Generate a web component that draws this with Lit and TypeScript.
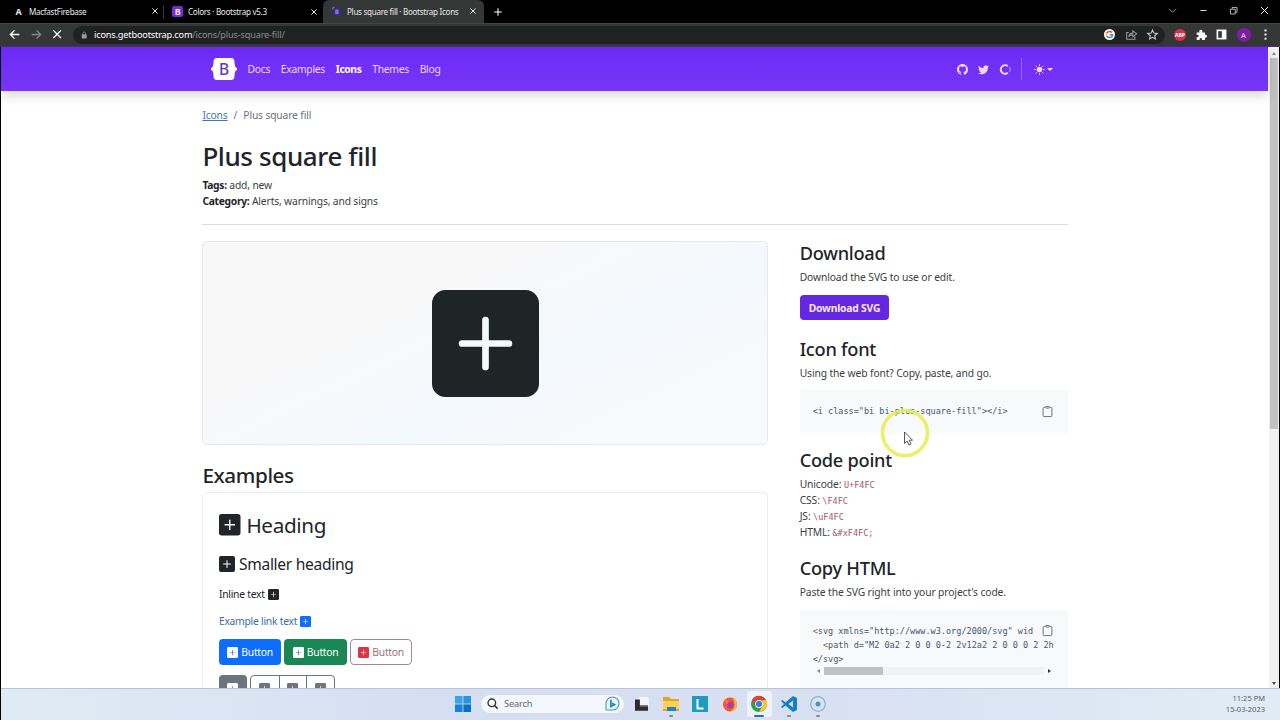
import { LitElement, html, css, svg } from "lit";
import { customElement } from "lit/decorators.js";

const PLUS =
  "M2 0a2 2 0 0 0-2 2v12a2 2 0 0 0 2 2h12a2 2 0 0 0 2-2V2a2 2 0 0 0-2-2H2zm6.5 4.5v3h3a.5.5 0 0 1 0 1h-3v3a.5.5 0 0 1-1 0v-3h-3a.5.5 0 0 1 0-1h3v-3a.5.5 0 0 1 1 0z";
const GITHUB =
  "M8 0C3.58 0 0 3.58 0 8c0 3.54 2.29 6.53 5.47 7.59.4.07.55-.17.55-.38 0-.19-.01-.82-.01-1.49-2.01.37-2.53-.49-2.69-.94-.09-.23-.48-.94-.82-1.13-.28-.15-.68-.52-.01-.53.63-.01 1.08.58 1.23.82.72 1.21 1.87.87 2.33.66.07-.52.28-.87.51-1.07-1.78-.2-3.64-.89-3.64-3.95 0-.87.31-1.59.82-2.15-.08-.2-.36-1.02.08-2.12 0 0 .67-.21 2.2.82.64-.18 1.32-.27 2-.27.68 0 1.36.09 2 .27 1.53-1.04 2.2-.82 2.2-.82.44 1.1.16 1.92.08 2.12.51.56.82 1.27.82 2.15 0 3.07-1.87 3.75-3.65 3.95.29.25.54.73.54 1.48 0 1.07-.01 1.93-.01 2.2 0 .21.15.46.55.38A8.012 8.012 0 0 0 16 8c0-4.42-3.58-8-8-8z";
const TWITTER =
  "M5.026 15c6.038 0 9.341-5.003 9.341-9.334 0-.14 0-.282-.006-.422A6.685 6.685 0 0 0 16 3.542a6.658 6.658 0 0 1-1.889.518 3.301 3.301 0 0 0 1.447-1.817 6.533 6.533 0 0 1-2.087.793A3.286 3.286 0 0 0 7.875 6.03a9.325 9.325 0 0 1-6.767-3.429 3.289 3.289 0 0 0 1.018 4.382A3.323 3.323 0 0 1 .64 6.575v.045a3.288 3.288 0 0 0 2.632 3.218 3.203 3.203 0 0 1-.865.115 3.23 3.23 0 0 1-.614-.057 3.283 3.283 0 0 0 3.067 2.277A6.588 6.588 0 0 1 .78 13.58a6.32 6.32 0 0 1-.78-.045A9.344 9.344 0 0 0 5.026 15z";

const icon = (cls: string, body: unknown, box = "0 0 16 16") =>
  html`<svg class="ic ${cls}" viewBox=${box}>${body}</svg>`;
const plus = (cls = "s11") => icon(cls, svg`<path fill="currentColor" d=${PLUS} />`);
const clip = () =>
  icon("s11", svg`<path fill="none" stroke="currentColor" stroke-width="1.300" d="M4.500 2H3.200A1.600 1.600 0 0 0 1.600 3.600V13.800A1.600 1.600 0 0 0 3.200 15.400H12.800A1.600 1.600 0 0 0 14.400 13.800V3.600A1.600 1.600 0 0 0 12.800 2H11.500M6 .7H10Q10.700 .7 10.700 1.400V2.300Q10.700 3 10 3H6Q5.300 3 5.300 2.300V1.400Q5.300 .7 6 .7Z" />`);
const cross = (cls = "s7") =>
  icon(cls, svg`<path stroke="currentColor" stroke-width="2.600" d="M1 1 15 15M15 1 1 15" />`);

const reset = css`
  * { box-sizing: border-box; }
  .ic { display: block; flex: none; overflow: visible; }
  .s7 { width: 6px; height: 6px; }
  .s11 { width: 11px; height: 11px; }
  .s12 { width: 13px; height: 13px; }
  .s16 { width: 16px; height: 16px; }
  .s21 { width: 21.500px; height: 21.500px; }
  .grow { flex: 1; }
`;

@customElement("browser-chrome")
class BrowserChrome extends LitElement {
  static styles = [reset, css`
    :host { display: block; height: 47px; background: #000; color: #e8e8e8; font: 8.100px "Noto Sans", sans-serif; flex: none; }
    .tabs { display: flex; height: 23px; align-items: center; padding-left: 2px; }
    .tab { display: flex; align-items: center; height: 23px; width: 161px; padding: 0 5px 1px 11px; letter-spacing: -0.300px; white-space: nowrap; }
    .tab.second { width: 160px; padding: 0 6px 0 8px; border-left: 1px solid #333; height: 14px; }
    .tab.active { background: #353636; border-radius: 6px 6px 0 0; width: 161px; padding: 0 8px 1px 8px; }
    .fav { width: 11px; height: 11px; margin-right: 5px; display: grid; place-items: center; font-weight: 700; font-size: 9px; line-height: 11px; }
    .fav.b { background: #7a2bd0; border-radius: 2px; }
    .new { margin-left: 11px; }
    .win { display: flex; align-items: center; gap: 23.600px; padding: 0 12px 3px 0; }
    .s8 { width: 7px; height: 7px; }
    .bar { display: flex; height: 24px; background: #353636; align-items: center; padding: 0 9px 1px 9px; border-top: 1px solid #434444; border-bottom: 1px solid #43385c; }
    .nav { display: flex; gap: 10.500px; align-items: center; width: 64px; flex: none; }
    .url { flex: 1; display: flex; align-items: center; height: 18px; border-radius: 9px; background: #1f2122; padding: 0 7px 0 8px; font-size: 9.200px; letter-spacing: -0.180px; color: #878b8b; }
    .url .lock { margin-right: 7px; color: #9a9d9d; }
    .url b { color: #fff; font-weight: 400; }
    .acts { display: flex; gap: 10.500px; align-items: center; }
    .ext { display: flex; gap: 9.500px; align-items: center; padding-left: 9px; }
    .abp { width: 12px; height: 12px; border-radius: 6px; background: #d5314b; color: #fff; display: grid; place-items: center; font: 700 5px/12px "Noto Sans", sans-serif; }
    .ava { width: 14px; height: 14px; border-radius: 7px; background: #7b1fa2; color: #f2d6ff; display: grid; place-items: center; font: 7.500px/14px "Noto Sans", sans-serif; }
  `];
  render() {
    return html`
      <div class="tabs">
        <div class="tab"><span class="fav">A</span><span>MacfastFirebase</span><span class="grow"></span>${cross()}</div>
        <div class="tab second"><span class="fav b">B</span><span>Colors · Bootstrap v5.3</span><span class="grow"></span>${cross()}</div>
        <div class="tab active">
          <span class="fav">${icon("s11", svg`<circle cx="8.500" cy="8.500" r="6" fill="#3a2a80" /><path d="M2 5Q3 2 5 1" stroke="#8a70e8" fill="none" stroke-width="1.500" /><rect x="6" y="5" width="5" height="7" rx="1.500" fill="#7f6ce8" />`)}</span>
          <span>Plus square fill · Bootstrap Icons</span><span class="grow"></span>${cross()}
        </div>
        ${icon("s7 new", svg`<path stroke="#fff" stroke-width="2.800" d="M8-2V18M-2 8H18" />`)}
        <span class="grow"></span>
        <div class="win">
          ${icon("s8", svg`<path fill="none" stroke="#aaa" stroke-width="2" d="M0 4 8 12 16 4" />`)}
          ${icon("s8", svg`<path stroke="#ddd" stroke-width="2.200" d="M1 8H15" />`)}
          ${icon("s8", svg`<path fill="none" stroke="#ccc" stroke-width="2" d="M1 5H12V16H1ZM5 4V1H16V12H13" />`)}
          ${icon("s8", svg`<path stroke="#fff" stroke-width="2.200" d="M0 0 16 16M16 0 0 16" />`)}
        </div>
      </div>
      <div class="bar">
        <div class="nav">
          ${icon("s11", svg`<path fill="none" stroke="#fff" stroke-width="2" d="M15 8H2M8 2 2 8 8 14" />`)}
          ${icon("s11", svg`<path fill="none" stroke="#858585" stroke-width="2" d="M1 8H14M8 2 14 8 8 14" />`)}
          ${icon("s11", svg`<path stroke="#fff" stroke-width="2" d="M2 2 13 13M13 2 2 13" />`)}
        </div>
        <div class="url">
          ${icon("s7 lock", svg`<rect x="2" y="6" width="13" height="11" rx="1" fill="currentColor" /><path d="M5 6V2Q8.500-3 12 2V6" fill="none" stroke="currentColor" stroke-width="2" />`)}
          <b>icons.getbootstrap.com</b>/icons/plus-square-fill/
          <span class="grow"></span>
          <div class="acts">
            ${icon("s11", svg`<circle cx="8" cy="8" r="8" fill="#fff" /><g fill="none" stroke-width="2.200"><path d="M11.500 5A4.600 4.600 0 0 0 4 6" stroke="#ea4335" /><path d="M4 6A4.600 4.600 0 0 0 4 10.200" stroke="#fbbc05" /><path d="M4 10.200A4.600 4.600 0 0 0 11 11.400" stroke="#34a853" /><path d="M11 11.400A4.600 4.600 0 0 0 12.500 8.200H8" stroke="#4285f4" /></g>`)}
            ${icon("s11", svg`<path fill="none" stroke="#999" stroke-width="1.500" d="M4 5H1V15H13V11M4 11Q5 6 10 6V2.500L15.500 7 10 11.500V8.500Q6 8.500 4 11Z" />`)}
            ${icon("s11", svg`<path fill="none" stroke="#ccc" stroke-width="1.500" d="M8 1.500 10 6 15 6.500 11.200 9.800 12.300 14.500 8 12 3.700 14.500 4.800 9.800 1 6.500 6 6Z" />`)}
          </div>
        </div>
        <div class="ext">
          <span class="abp">ABP</span>
          ${icon("s11", svg`<path fill="#fff" d="M1 5H5Q4 1 7 1T9 5H13V8.500Q16 8 16 10.500T13 12.500V16H9Q9 13 7 13T5 16H1V12Q4 12 4 10T1 8.500Z" />`)}
          ${icon("s11", svg`<rect x="2" y="2" width="12" height="12" fill="none" stroke="#fff" stroke-width="2.400" /><rect x="8.500" y="2" width="5.500" height="12" fill="#fff" />`)}
          <span class="ava">A</span>
          ${icon("s11", svg`<g fill="#ddd"><circle cx="8" cy="2" r="1.700" /><circle cx="8" cy="8" r="1.700" /><circle cx="8" cy="14" r="1.700" /></g>`)}
        </div>
      </div>`;
  }
}

@customElement("site-nav")
class SiteNav extends LitElement {
  static styles = [reset, css`
    :host { display: flex; flex: none; align-items: center; height: 44px; margin-right: 1px; padding: 0 215px 0 210px; background: linear-gradient(#6d2af5, #7835f8); box-shadow: 0 5px 11px rgba(0, 0, 0, 0.150); color: #eed9fd; font: 10.300px "Noto Sans", sans-serif; letter-spacing: -0.270px; position: relative; }
    .brand { display: grid; margin-right: 10.500px; }
    .brand > * { grid-area: 1 / 1; }
    .brand svg { width: 26px; height: 22px; }
    .brand span { place-self: center; color: #5f3bb5; font: 500 15.500px/22px "Noto Sans", sans-serif; letter-spacing: 0; }
    .links { display: flex; gap: 10.800px; }
    .links b { color: #fff; letter-spacing: -0.400px; }
    .icons { display: flex; align-items: center; gap: 10.500px; }
    .vr { width: 1px; height: 22px; background: #9a6bf9; }
    .caret { border: 3px solid transparent; border-top-color: currentColor; border-bottom: 0; margin-left: -8px; }
    .theme { margin-left: 1px; }
  `];
  render() {
    return html`
      <div class="brand">
        <svg viewBox="0 0 26 22"><path fill="#fff" d="M6 0H20Q23.500 0 23.500 4Q23.400 9.500 26 10V12Q23.400 12.500 23.500 18Q23.500 22 20 22H6Q2.500 22 2.500 18Q2.600 12.500 0 12V10Q2.600 9.500 2.500 4Q2.500 0 6 0Z" /></svg>
        <span>B</span>
      </div>
      <div class="links"><span>Docs</span><span>Examples</span><b>Icons</b><span>Themes</span><span>Blog</span></div>
      <span class="grow"></span>
      <div class="icons">
        ${icon("s11", svg`<path fill="currentColor" d=${GITHUB} />`)}
        ${icon("s11", svg`<path fill="currentColor" d=${TWITTER} />`)}
        ${icon("s11", svg`<path fill="none" stroke="currentColor" stroke-width="3" d="M11.300 3A6.300 6.300 0 1 0 11.300 13" /><path fill="none" stroke="#b489fb" stroke-width="2" d="M14 4.500Q16 8 14 11.500" />`)}
        <span class="vr"></span>
        ${icon("s11 theme", svg`<circle cx="8" cy="8" r="4" fill="currentColor" /><path stroke="currentColor" stroke-width="1.200" stroke-linecap="round" d="M8 .5V2.500M8 13.500V15.500M.5 8H2.500M13.500 8H15.500M2.700 2.700 4.100 4.100M11.900 11.900 13.300 13.300M13.300 2.700 11.900 4.100M4.100 11.900 2.700 13.300" />`)}
        <span class="caret"></span>
      </div>`;
  }
}

@customElement("icon-page")
class IconPage extends LitElement {
  static styles = [reset, css`
    :host { display: block; flex: 1; min-height: 0; overflow: hidden; padding: 16px 201px 0 201.400px; color: #212529; font: 10.300px/16px "Noto Sans", sans-serif; letter-spacing: -0.240px; white-space: nowrap; }
    h1, h2, h3, p { margin: 0; font-weight: 500; }
    p { font-weight: 400; color: #3c4043; letter-spacing: -0.120px; }
    .crumb { display: flex; gap: 6px; color: #6c757d; letter-spacing: -0.150px; }
    .crumb u { color: #3f78b5; }
    h1 { font-size: 26px; line-height: 32px; margin: 17px 0 5px; letter-spacing: -0.400px; }
    p.meta { letter-spacing: -0.150px; }
    .meta b { color: #212529; letter-spacing: -0.300px; }
    .rule { height: 1px; background: #dcdddd; margin: 15px 0 16px; }
    .cols { display: grid; grid-template-columns: 565.600px 268px; column-gap: 31.700px; }
    .preview { height: 204px; border: 1px solid #e6e9ec; border-radius: 5px; display: grid; place-items: center; background: linear-gradient(155deg, #f8f8f9 35%, #f4f9fd 60%, #f8f9fb 90%); color: #1f2426; }
    .preview svg { width: 107px; height: 107px; }
    h2 { font-size: 20.700px; line-height: 26px; margin: 17px 0 4px; letter-spacing: -0.400px; }
    .card { border: 1px solid #e8ebed; border-radius: 5px; height: 240px; padding: 16px 15.500px; }
    .row { display: flex; align-items: center; }
    .r1 { font-size: 20.700px; height: 32px; gap: 6px; letter-spacing: -0.350px; }
    .r2 { font-size: 15.600px; height: 24px; gap: 4px; margin-top: 11px; letter-spacing: -0.300px; }
    .r3 { height: 16px; gap: 3px; margin-top: 10px; }
    .r4 { height: 16px; gap: 3px; margin-top: 11px; color: #3a6ea8; }
    .r4 svg { color: #0d6efd; }
    .btns { display: flex; gap: 3px; margin-top: 10px; }
    .btn { display: flex; align-items: center; gap: 3px; height: 26px; width: 62.500px; justify-content: center; border-radius: 4px; border: 1px solid transparent; color: #fff; }
    .btn.p { background: #0d6efd; }
    .btn.g { background: #198754; }
    .btn.o { border-color: #a9868f; color: #9c6f7a; }
    .btn.o svg { color: #dc3545; }
    .tools { display: flex; gap: 3px; margin-top: 10px; color: #6c757d; }
    .tb { width: 28px; height: 26px; display: grid; place-items: center; background: #6c757d; color: #fff; border-radius: 4px; }
    .grp { display: flex; border: 1px solid #6c757d; border-radius: 4px; }
    .grp span { width: 27.700px; height: 24px; display: grid; place-items: center; }
    .grp span + span { border-left: 1px solid #6c757d; }
    h3 { font-size: 18.200px; line-height: 24px; margin: 16px 0 4px; letter-spacing: -0.250px; }
    h3.first { margin-top: 0; }
    .dl { display: grid; place-items: center; width: 89.500px; height: 25px; margin: 10px 0 17px; border-radius: 4px; background: #6528e0; color: #f8e6ff; font-weight: 700; letter-spacing: -0.200px; }
    .code { position: relative; background: #f8f9fa; font: 8.520px/14px "DejaVu Sans Mono", monospace; letter-spacing: 0; color: #4c5560; overflow: hidden; white-space: pre; }
    .c1 { height: 43px; margin-top: 9px; padding: 14px 13px; }
    .c2 { height: 90px; margin-top: 10px; padding: 14px 13px 0 13px; }
    .line { height: 14px; }
    .copy { position: absolute; right: 14.500px; color: #5d6266; }
    .c1 .copy { top: 16px; }
    .c2 .copy { top: 15px; }
    h3.cp { margin-top: 15px; }
    code { font: 8.520px "DejaVu Sans Mono", monospace; letter-spacing: 0; color: #a5566f; }
    .sc { display: flex; align-items: center; height: 8px; margin-top: 1px; margin-left: 4px; }
    .thumb { width: 59px; height: 8px; background: #c1c1c1; margin-left: 4px; }
    .ar { border: 2.500px solid transparent; }
    .ar.l { border-left: 0; border-right: 3px solid #888; }
    .ar.r { border-right: 0; border-left: 3px solid #333; margin-right: 4px; }
    .track { flex: 1; height: 8px; background: #f1f2f3; margin-right: 4px; }
    .tg { color: #7c6a3a; }
    .st { color: #3f5875; }
  `];
  render() {
    return html`
      <div class="crumb"><u>Icons</u><span>/</span><span>Plus square fill</span></div>
      <h1>Plus square fill</h1>
      <p class="meta"><b>Tags:</b> add, new</p>
      <p class="meta"><b>Category:</b> Alerts, warnings, and signs</p>
      <div class="rule"></div>
      <div class="cols">
        <div>
          <div class="preview">${plus("")}</div>
          <h2>Examples</h2>
          <div class="card">
            <div class="row r1">${plus("s21")}<span>Heading</span></div>
            <div class="row r2">${plus("s16")}<span>Smaller heading</span></div>
            <div class="row r3"><span>Inline text</span>${plus()}</div>
            <div class="row r4"><span>Example link text</span>${plus()}</div>
            <div class="btns">
              <span class="btn p">${plus()}Button</span>
              <span class="btn g">${plus()}Button</span>
              <span class="btn o">${plus()}Button</span>
            </div>
            <div class="tools">
              <span class="tb">${plus()}</span>
              <div class="grp"><span>${plus()}</span><span>${plus()}</span><span>${plus()}</span></div>
            </div>
          </div>
        </div>
        <div>
          <h3 class="first">Download</h3>
          <p>Download the SVG to use or edit.</p>
          <div class="dl">Download SVG</div>
          <h3>Icon font</h3>
          <p>Using the web font? Copy, paste, and go.</p>
          <div class="code c1"><div class="line">&lt;i class=<span class="st">"bi bi-plus-square-fill"</span>&gt;&lt;/i&gt;</div><div class="copy">${clip()}</div></div>
          <h3 class="cp">Code point</h3>
          <p>Unicode: <code>U+F4FC</code></p>
          <p>CSS: <code>\\F4FC</code></p>
          <p>JS: <code>\\uF4FC</code></p>
          <p>HTML: <code>&amp;#xF4FC;</code></p>
          <h3>Copy HTML</h3>
          <p>Paste the SVG right into your project's code.</p>
          <div class="code c2"><div class="line"><span class="tg">&lt;</span>svg xmlns=<span class="st">"http://www.w3.org/2000/svg"</span> wid</div><div class="line">  <span class="tg">&lt;</span>path d=<span class="st">"M2 0a2 2 0 0 0-2 2v12a2 2 0 0 0 2 2h</span></div><div class="line">&lt;/svg&gt;</div><div class="sc"><span class="ar l"></span><span class="thumb"></span><span class="track"></span><span class="ar r"></span></div><div class="copy">${clip()}</div></div>
        </div>
      </div>`;
  }
}

@customElement("task-bar")
class TaskBar extends LitElement {
  static styles = [reset, css`
    :host { display: flex; flex: none; height: 32px; margin-left: 1px; border-top: 1px solid #b9c3d6; background: linear-gradient(90deg, #dfebf4, #d6def2 35%, #d8e0f2 65%, #e0ebf5 95%); align-items: center; padding: 0 15px 2px 454px; color: #5a626c; font: 7.500px/11px "Noto Sans", sans-serif; }
    .search { display: flex; align-items: center; width: 145px; height: 20px; margin: 0 4px 0 9px; padding: 0 5px 0 6px; gap: 6px; border-radius: 10px; background: #f4f8fc; border: 1px solid #d3dce8; font-size: 9.300px; color: #666b70; letter-spacing: -0.200px; }
    .apps { display: flex; gap: 5px; align-items: center; }
    .app { width: 24.500px; height: 26px; display: grid; place-items: center; border-radius: 3px; position: relative; }
    .app.on { background: #eef2fa; }
    .app::after { content: ""; position: absolute; bottom: 0; width: 4px; height: 2px; border-radius: 1px; background: transparent; }
    .app.run::after { background: #82889a; }
    .app.on::after { background: #2173b8; width: 10px; }
    .clock { text-align: right; }
  `];
  render() {
    return html`
      ${icon("s16", svg`<g fill="#1785d4"><rect width="7.600" height="7.600" fill="#38a5e8" /><rect x="8.400" width="7.600" height="7.600" fill="#2497de" /><rect y="8.400" width="7.600" height="7.600" /><rect x="8.400" y="8.400" width="7.600" height="7.600" fill="#0b6fc4" /></g>`)}
      <div class="search">
        ${icon("s11", svg`<circle cx="7" cy="7" r="5.500" fill="none" stroke="#333" stroke-width="2" /><path d="M11 11 15.500 15.500" stroke="#333" stroke-width="2.200" />`)}
        <span>Search</span><span class="grow"></span>
        ${icon("s12", svg`<path d="M0 15V8A8 8 0 1 1 8 16H1Q0 16 0 15Z" fill="#e8f6fb" stroke="#4e95b0" stroke-width="1.300" /><path d="M6 3.500V11.500L10.500 9.300 7.500 7.500" fill="none" stroke="#1b87b8" stroke-width="2" />`)}
      </div>
      <div class="apps">
        <span class="app">${icon("s12", svg`<rect x="4" width="13" height="12" fill="#f4f5f6" /><path d="M0 3H6V10H16V17H0Z" fill="#2c2c30" /><path d="M6 10H16V12H6Z" fill="#777" />`)}</span>
        <span class="app run">${icon("s16", svg`<path d="M0 1H6L8 3H16V15H0Z" fill="#e0a52a" /><path d="M0 5H16V13H0Z" fill="#fbd155" /><path d="M4 11H13V15H4Z" fill="#2186b8" />`)}</span>
        <span class="app">${icon("s16", svg`<rect width="16" height="16" fill="#1f9ac0" /><path d="M5.500 3V12.500H11.500" stroke="#fff" stroke-width="2" fill="none" />`)}</span>
        <span class="app">${icon("s16", svg`<circle cx="8" cy="8.500" r="7" fill="#f5533d" /><path d="M11 1Q15 4 15 9A7 7 0 0 1 8 15.500Q13 13 12.500 8Z" fill="#ffb52e" /><circle cx="8.500" cy="9" r="3.200" fill="#a53fb0" /><path d="M2 3Q4 5 7 5L5 8Z" fill="#ff8a2a" />`)}</span>
        <span class="app on">${icon("s16", svg`<circle cx="8" cy="8" r="8" fill="#2da04e" /><path d="M1 4A8 8 0 0 1 15 4L8 4.500 4.500 10Z" fill="#dd4436" /><path d="M15 4A8 8 0 0 1 8 16L11.500 10 11 4.500Z" fill="#f8c62c" /><circle cx="8" cy="8" r="3.900" fill="#fff" /><circle cx="8" cy="8" r="3" fill="#3b78e0" />`)}</span>
        <span class="app run">${icon("s16", svg`<path d="M12 0 16 2V14L12 16 4.500 9.500 1.500 12 0 11 3 8 0 5 1.500 4 4.500 6.500ZM12 4.500 7.500 8 12 11.500Z" fill="#1280c8" fill-rule="evenodd" />`)}</span>
        <span class="app run">${icon("s16", svg`<circle cx="8" cy="8" r="7.300" fill="#d5e5f3" stroke="#8db2cc" stroke-width="1.300" /><circle cx="8" cy="8" r="2.500" fill="#5292ba" />`)}</span>
      </div>
      <span class="grow"></span>
      <div class="clock">11:25 PM<br />15-03-2023</div>`;
  }
}

@customElement("app-root")
class AppRoot extends LitElement {
  static styles = [reset, css`
    :host { display: flex; flex-direction: column; position: relative; width: 1280px; height: 720px; overflow: hidden; background: #000; }
    .view { flex: 1; min-height: 0; display: flex; margin: 0 1px; background: #fff; }
    .page { flex: 1; min-width: 0; display: flex; flex-direction: column; }
    .scroll { width: 10px; display: flex; flex-direction: column; align-items: center; background: #f1f1f1; padding: 5px 0 3px; }
    .up, .down { border: 2.500px solid transparent; }
    .up { border-top: 0; border-bottom: 3px solid #888; }
    .down { border-bottom: 0; border-top: 3px solid #444; }
    .bar { width: 8px; height: 371px; margin-top: 3px; background: #c1c1c1; }
    .pointer { position: absolute; left: 880px; top: 408px; width: 50px; height: 50px; }
  `];
  render() {
    return html`
      <browser-chrome></browser-chrome>
      <div class="view">
        <div class="page"><site-nav></site-nav><icon-page></icon-page></div>
        <div class="scroll"><span class="up"></span><span class="bar"></span><span class="grow"></span><span class="down"></span></div>
      </div>
      <task-bar></task-bar>
      <svg class="pointer" viewBox="0 0 50 50">
        <circle cx="25" cy="25" r="22.500" fill="none" stroke="#e6ee4e" stroke-width="3.500" opacity=".85" />
        <path d="M24.500 24V35.500L27.200 33 29 37 31 36 29.200 32.200H32.500Z" fill="#fff" stroke="#444" stroke-width=".9" />
      </svg>`;
  }
}
